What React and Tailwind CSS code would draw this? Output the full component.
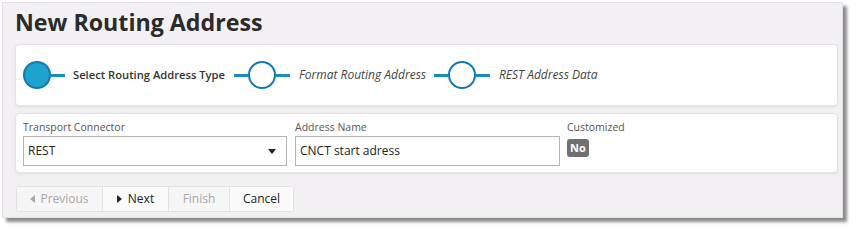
export default function App() {
  const font = { fontFamily: '"Open Sans", "Noto Sans", sans-serif' };
  const Line = () => <div className="h-[3px] w-[14px] bg-[#1a8cc4]" />;
  const Circle = ({ filled }) => (
    <div
      className={
        "h-[28px] w-[28px] rounded-full border-2 border-[#1279b3] " +
        (filled ? "bg-[#1ea3cf]" : "bg-white")
      }
    />
  );
  return (
    <div className="h-[231px] w-[856px] bg-white" style={font}>
      <div className="ml-[2px] mt-[2px] flex h-[216px] w-[841px] flex-col border border-[#e2e0e4] bg-[#f2f0f3] shadow-[4px_4px_3px_rgba(0,0,0,0.45)]">
        <h1 className="ml-[12px] mt-[3px] h-[38px] text-[23.2px] font-bold leading-[32px] text-[#2b2b2b]">
          New Routing Address
        </h1>
        <div className="ml-[12px] flex h-[62px] w-[823px] items-center rounded-[4px] border border-[#e3e3e3] bg-white pl-[7px] shadow-[0_1px_2px_rgba(0,0,0,0.08)]">
          <Circle filled />
          <Line />
          <span className="ml-[8px] mr-[9px] text-[11.2px] font-semibold text-[#333]">Select Routing Address Type</span>
          <Line />
          <Circle />
          <Line />
          <span className="ml-[9px] mr-[8px] text-[12px] italic text-[#444]">Format Routing Address</span>
          <Line />
          <Circle />
          <Line />
          <span className="ml-[9px] text-[12px] italic text-[#444]">REST Address Data</span>
        </div>
        <div className="ml-[12px] mt-[7px] flex h-[60px] w-[823px] gap-[8px] rounded-[4px] border border-[#e3e3e3] bg-white pl-[7px] pt-[6px] shadow-[0_1px_2px_rgba(0,0,0,0.08)]">
          <div className="flex w-[264px] flex-col">
            <span className="text-[10.5px] leading-[15px] text-[#555]">Transport Connector</span>
            <div className="mt-[1px] flex h-[30px] items-center justify-between border border-[#b5b5b5] pl-[4px] pr-[10px] text-[12px] text-[#222]">
              <span>REST</span>
              <svg width="8" height="5" viewBox="0 0 8 5"><path d="M0 0 L8 0 L4 5 Z" fill="#222" /></svg>
            </div>
          </div>
          <div className="flex w-[265px] flex-col">
            <span className="text-[10.5px] leading-[15px] text-[#555]">Address Name</span>
            <div className="mt-[1px] flex h-[30px] items-center border border-[#b5b5b5] pl-[4px] text-[12px] text-[#222]">
              CNCT start adress
            </div>
          </div>
          <div className="-ml-[1px] flex flex-col">
            <span className="text-[10.5px] leading-[15px] text-[#555]">Customized</span>
            <span className="mt-[4px] flex h-[18px] w-[22px] items-center justify-center rounded-[3px] bg-[#707070] text-[11px] font-bold text-white">No</span>
          </div>
        </div>
        <div className="ml-[13px] mt-[13px] flex h-[26px] w-fit rounded-[3px] border border-[#e2e2e2] text-[12px]">
          <div className="flex w-[85px] items-center justify-center gap-[5px] bg-[#f6f6f6] text-[#a8a8a8]">
            <svg width="5" height="8" viewBox="0 0 5 8"><path d="M5 0 L5 8 L0 4 Z" fill="#a8a8a8" /></svg>
            Previous
          </div>
          <div className="flex w-[66px] items-center justify-center gap-[6px] border-l border-[#e2e2e2] bg-[#fbfbfb] text-[#222]">
            <svg width="5" height="8" viewBox="0 0 5 8"><path d="M0 0 L0 8 L5 4 Z" fill="#222" /></svg>
            Next
          </div>
          <div className="flex w-[61px] items-center justify-center border-l border-[#e2e2e2] bg-[#f6f6f6] text-[#a8a8a8]">
            Finish
          </div>
          <div className="flex w-[64px] items-center justify-center border-l border-[#e2e2e2] bg-[#fbfbfb] text-[#222]">
            Cancel
          </div>
        </div>
      </div>
    </div>
  );
}
